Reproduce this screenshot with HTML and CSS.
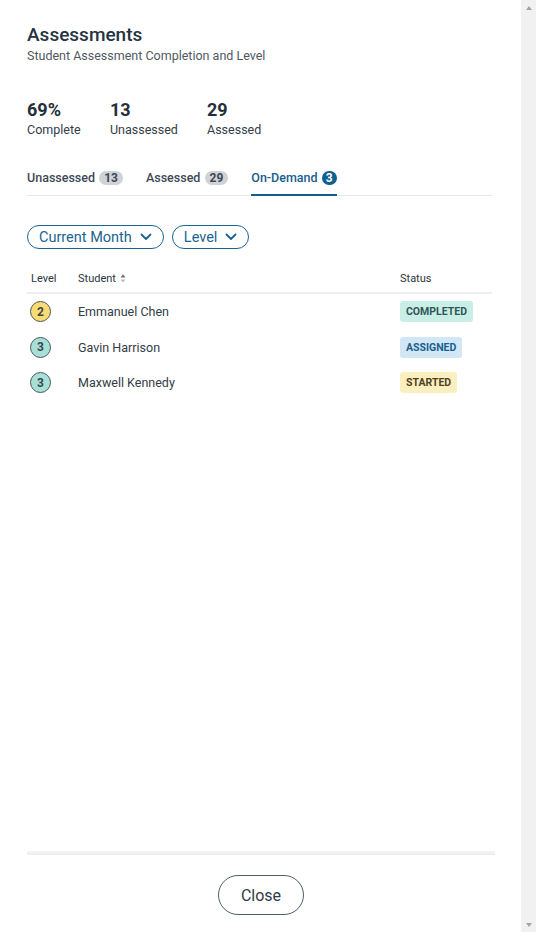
FILE: index.html
```html
<!DOCTYPE html>
<html lang="en">
<head>
<meta charset="utf-8">
<title>Assessments</title>
<link rel="stylesheet" href="styles.css">
</head>
<body>
<div class="frame">
<div class="panel">
  <main class="content">
    <header class="header">
      <h1 class="title">Assessments</h1>
      <p class="subtitle">Student Assessment Completion and Level</p>
    </header>

    <section class="stats">
      <div class="stat stat-complete">
        <div class="stat-value">69%</div>
        <div class="stat-label">Complete</div>
      </div>
      <div class="stat stat-unassessed">
        <div class="stat-value">13</div>
        <div class="stat-label">Unassessed</div>
      </div>
      <div class="stat">
        <div class="stat-value">29</div>
        <div class="stat-label">Assessed</div>
      </div>
    </section>

    <nav class="tabs">
      <div class="tab">Unassessed <span class="count">13</span></div>
      <div class="tab">Assessed <span class="count">29</span></div>
      <div class="tab active">On-Demand <span class="count">3</span></div>
    </nav>

    <div class="filters">
      <button class="chip">Current Month
        <svg class="chev" viewBox="0 0 12 8" width="12" height="8"><path d="M1.5 1.5 L6 6 L10.5 1.5" fill="none" stroke="currentColor" stroke-width="1.8" stroke-linecap="round" stroke-linejoin="round"/></svg>
      </button>
      <button class="chip">Level
        <svg class="chev" viewBox="0 0 12 8" width="12" height="8"><path d="M1.5 1.5 L6 6 L10.5 1.5" fill="none" stroke="currentColor" stroke-width="1.8" stroke-linecap="round" stroke-linejoin="round"/></svg>
      </button>
    </div>

    <div class="table">
      <div class="row head">
        <div class="c-level">Level</div>
        <div class="c-student">Student
          <svg class="sort" viewBox="0 0 6 9" width="6" height="9"><path d="M3 0.5 L5.5 3.5 H0.5 Z" fill="#666"/><path d="M3 8.5 L5.5 5.5 H0.5 Z" fill="#bbb"/></svg>
        </div>
        <div class="c-status">Status</div>
      </div>
      <div class="row">
        <div class="c-level"><span class="lvl lvl-2">2</span></div>
        <div class="c-student">Emmanuel Chen</div>
        <div class="c-status"><span class="badge completed">COMPLETED</span></div>
      </div>
      <div class="row">
        <div class="c-level"><span class="lvl lvl-3">3</span></div>
        <div class="c-student">Gavin Harrison</div>
        <div class="c-status"><span class="badge assigned">ASSIGNED</span></div>
      </div>
      <div class="row">
        <div class="c-level"><span class="lvl lvl-3">3</span></div>
        <div class="c-student">Maxwell Kennedy</div>
        <div class="c-status"><span class="badge started">STARTED</span></div>
      </div>
    </div>
  </main>

  <footer class="footer">
    <div class="divider"></div>
    <button class="close">Close</button>
  </footer>
</div>
<div class="scrollbar" aria-hidden="true">
  <span class="arrow up"></span>
  <span class="arrow down"></span>
</div>
</div>
</body>
</html>
```

FILE: styles.css
```css
* { box-sizing: border-box; }
body {
  margin: 0;
  font-family: Roboto, "Liberation Sans", Arial, sans-serif;
  color: #2b3440;
  background: #fff;
}
.frame {
  display: flex;
  height: 932px;
  overflow: hidden;
}
.panel {
  flex: 1;
  display: flex;
  flex-direction: column;
  padding: 0 26px 17px 27px;
}
.scrollbar {
  width: 15px;
  background: #f1f1f1;
  display: flex;
  flex-direction: column;
  justify-content: space-between;
  align-items: center;
  padding: 6px 0 5px;
}
.arrow {
  width: 0;
  height: 0;
  border-left: 3.5px solid transparent;
  border-right: 3.5px solid transparent;
}
.arrow.up { border-bottom: 4px solid #a3a3a3; }
.arrow.down { border-top: 4px solid #a3a3a3; }
.content {
  flex: 1;
  padding-right: 3px;
}
.header {
  padding-top: 24px;
}
.title {
  margin: 0;
  font-size: 19px;
  font-weight: 500;
  line-height: 22px;
  color: #263341;
}
.subtitle {
  margin: 2px 0 0;
  font-size: 12.5px;
  line-height: 16px;
  color: #4f5862;
}
.stats {
  display: flex;
  margin-top: 35px;
}
.stat-complete { width: 83px; }
.stat-unassessed { width: 97px; }
.stat-value {
  font-size: 18px;
  font-weight: 700;
  line-height: 22px;
  color: #26303b;
}
.stat-label {
  font-size: 12.5px;
  line-height: 16px;
  margin-top: 1px;
  color: #333c46;
}
.tabs {
  display: flex;
  gap: 23px;
  margin-top: 31px;
  border-bottom: 1px solid #e6e8ea;
}
.tab {
  font-size: 12.5px;
  font-weight: 500;
  color: #3d4955;
  padding: 0 0 8px;
  line-height: 17px;
  border-bottom: 2px solid transparent;
  margin-bottom: -1px;
}
.tab .count {
  display: inline-block;
  background: #cfd3d8;
  color: #3d4955;
  font-weight: 700;
  font-size: 12px;
  line-height: 14px;
  padding: 0 5px;
  border-radius: 8px;
  margin-left: 1px;
}
.tab.active {
  color: #175d8c;
  border-bottom-color: #175d8c;
}
.tab.active .count {
  background: #0f5f91;
  color: #fff;
  padding: 0 4px;
}
.filters {
  display: flex;
  gap: 8px;
  margin-top: 29px;
}
.chip {
  display: flex;
  align-items: center;
  gap: 8px;
  height: 24px;
  padding: 0 11px;
  border: 1.5px solid #1b6391;
  border-radius: 12px;
  background: #fff;
  color: #1b6391;
  font-family: Roboto, "Liberation Sans", Arial, sans-serif;
  font-size: 14.5px;
  cursor: pointer;
}
.chev { display: block; }
.table {
  margin-top: 20px;
}
.row {
  display: flex;
  align-items: center;
  height: 35.5px;
  font-size: 12.5px;
  color: #333c46;
}
.row.head {
  height: 18px;
  font-size: 11px;
  color: #2b3440;
  border-bottom: 2px solid #eceeef;
  box-sizing: content-box;
  padding-bottom: 5px;
}
.c-level {
  width: 51px;
  padding-left: 3px;
}
.row.head .c-level { padding-left: 4px; }
.c-student {
  flex: 1;
  display: flex;
  align-items: center;
  gap: 4px;
}
.sort { display: block; }
.c-status {
  width: 92px;
}
.lvl {
  display: flex;
  align-items: center;
  justify-content: center;
  width: 21px;
  height: 21px;
  border-radius: 50%;
  border: 1px solid #4c5560;
  font-size: 12px;
  font-weight: 700;
  color: #3d4650;
}
.lvl-2 { background: #f8dc72; }
.lvl-3 { background: #a7e0d7; }
.badge {
  display: inline-block;
  padding: 0 6px;
  height: 21px;
  line-height: 21px;
  border-radius: 3px;
  font-size: 10.5px;
  font-weight: 700;
}
.completed { background: #c9eee6; color: #2f5655; }
.assigned { background: #d2e7f6; color: #19608f; }
.started { background: #fcefbf; color: #4e4222; }
.footer {
  display: flex;
  flex-direction: column;
  align-items: center;
}
.divider {
  align-self: stretch;
  height: 4px;
  background: linear-gradient(#f6f6f6, #ececec);
}
.close {
  margin-top: 20px;
  width: 86px;
  height: 40px;
  border: 1px solid #4d5d6c;
  border-radius: 20px;
  background: #fff;
  color: #2f3b47;
  font-family: Roboto, "Liberation Sans", Arial, sans-serif;
  font-size: 16px;
  cursor: pointer;
}
```
